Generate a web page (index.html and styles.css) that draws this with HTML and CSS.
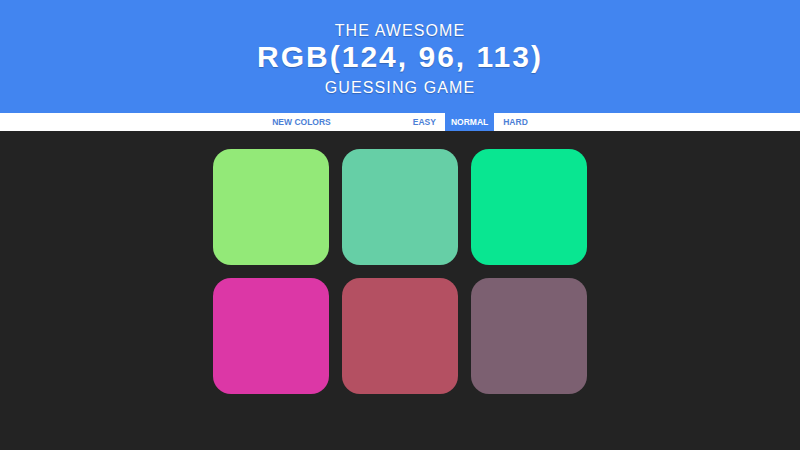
FILE: index.html
```html
<!DOCTYPE html>
<html lang="en">
<head>
    <meta charset="UTF-8">
    <meta name="viewport" content="width=device-width, initial-scale=1.0">
    <title>Color Game</title>
    <link rel="stylesheet" href="styles.css">
</head>
<body>
    <h1 class="header">
        <span class="header-line">The Awesome</span>
        <span class="header-line" id="colorDisplay">RGB(124, 96, 113)</span>
        <span class="header-line last">Guessing Game</span>
    </h1>

    <!-- Controls stripe -->
    <div class="stripe">
        <button id="reset">New Colors</button>
        <span id="message"></span>
        <button class="mode">Easy</button>
        <button class="mode selected">Normal</button>
        <button class="mode">Hard</button>
    </div>

    <div class="container">
        <div class="square" style="background: rgb(147, 233, 120);"></div>
        <div class="square" style="background: rgb(102, 207, 166);"></div>
        <div class="square" style="background: rgb(9, 230, 145);"></div>
        <div class="square" style="background: rgb(220, 55, 166);"></div>
        <div class="square" style="background: rgb(180, 80, 98);"></div>
        <div class="square" style="background: rgb(124, 96, 113);"></div>
    </div>
</body>
</html>
```

FILE: styles.css
```css
* {
    margin: 0;
    padding: 0;
    box-sizing: border-box;
}

body {
    background-color: #232323;
    font-family: "Liberation Sans", Arial, sans-serif;
}

.header {
    background-color: #4285f0;
    color: white;
    text-align: center;
    text-transform: uppercase;
    font-weight: normal;
    font-size: 16px;
    letter-spacing: 1.1px;
    line-height: 1.1;
    height: 113px;
    padding-top: 22px;
    text-shadow: 0 1px 1px rgba(0, 0, 0, 0.25);
}

.header-line {
    display: block;
}

.header-line.last {
    margin-top: 6px;
}

#colorDisplay {
    font-size: 30px;
    font-weight: bold;
    letter-spacing: 2px;
}

.stripe {
    background-color: white;
    height: 18px;
    display: flex;
    justify-content: center;
    gap: 3px;
}

.stripe button {
    border: none;
    background: none;
    text-transform: uppercase;
    height: 100%;
    font-family: inherit;
    font-weight: 700;
    font-size: 8.5px;
    color: #4d7fd6;
    padding: 0 6px;
    outline: none;
    cursor: pointer;
}

#message {
    display: inline-block;
    width: 64px;
}

.stripe button.selected {
    background-color: #4285f0;
    color: white;
}

.container {
    display: grid;
    grid-template-columns: repeat(3, 116px);
    gap: 13px;
    justify-content: center;
    padding-top: 18px;
}

.square {
    width: 116px;
    height: 116px;
    border-radius: 18px;
}
```
